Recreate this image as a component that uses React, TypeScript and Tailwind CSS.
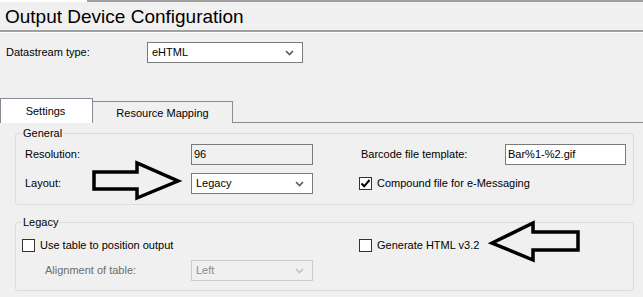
import React from "react";

const Chevron = ({ color = "#5a5a5a" }: { color?: string }) => (
  <svg width="9" height="6" viewBox="0 0 9 6" className="shrink-0">
    <path d="M1 1 L4.5 4.5 L8 1" fill="none" stroke={color} strokeWidth="1.6" />
  </svg>
);

const Select = ({ value, disabled = false, w = "w-[122px]" }: { value: string; disabled?: boolean; w?: string }) => (
  <div
    className={`${w} h-[21px] flex items-center justify-between pl-[4px] pr-[8px] border ${
      disabled ? "border-[#cccccc] bg-[#f0f0f0] text-[#8a8a8a]" : "border-[#7a7a7a] bg-white text-black"
    }`}
  >
    <span>{value}</span>
    <Chevron color={disabled ? "#c0c0c0" : "#5a5a5a"} />
  </div>
);

const Checkbox = ({ checked = false }: { checked?: boolean }) => (
  <div className="w-[13px] h-[13px] border border-[#333333] bg-white flex items-center justify-center shrink-0">
    {checked && (
      <svg width="11" height="11" viewBox="0 0 11 11">
        <path d="M1.5 5.5 L4.2 8.3 L9.5 2" fill="none" stroke="#000" strokeWidth="2" />
      </svg>
    )}
  </div>
);

export default function App() {
  return (
    <div
      className="w-[643px] h-[297px] bg-[#f0f0f0] relative overflow-hidden text-[11px] leading-[13px] text-black"
      style={{ fontFamily: '"Liberation Sans", Arial, sans-serif' }}
    >
      {/* top strip */}
      <div className="flex h-[2px]">
        <div className="w-[87px] bg-white" />
        <div className="flex-1 bg-[#a0a0a0]" />
      </div>
      {/* title */}
      <div className="h-[28px] pl-[5px] pt-[3px] text-[19px] leading-[24px]">Output Device Configuration</div>
      <div className="h-[3px] border-t-2 border-[#a0a0a0] bg-white" />

      {/* datastream */}
      <div className="flex items-center mt-[9px] pl-[6px]">
        <span className="w-[141px]">Datastream type:</span>
        <Select value="eHTML" w="w-[156px]" />
      </div>

      {/* tabs */}
      <div className="flex items-end mt-[35px] h-[25px]">
        <div className="w-[93px] h-[25px] border border-b-0 border-[#898c95] bg-white flex items-start justify-center pt-[6px] pr-[2px] relative z-10">
          Settings
        </div>
        <div className="w-[140px] h-[22px] border border-l-0 border-b-0 border-[#898c95] bg-[#f0f0f0] flex items-start justify-center pt-[5px]">
          Resource Mapping
        </div>
        <div className="flex-1 border-b border-[#898c95]" />
      </div>

      {/* panel */}
      <div className="pl-[15px] pr-[9px] pt-[10px]">
        {/* General group */}
        <div className="relative h-[72px] border border-[#dcdcdc] rounded-[3px]">
          <span className="absolute left-[6px] top-[-7px] px-[1px] bg-[#f0f0f0]">General</span>
          <div className="flex pt-[10px] pl-[9px]">
            <div className="flex flex-col gap-[8px]">
              <div className="flex items-center">
                <span className="w-[166px]">Resolution:</span>
                <div className="w-[122px] h-[21px] border border-[#7a7a7a] bg-[#f0f0f0] flex items-center pl-[2px]">96</div>
              </div>
              <div className="flex items-center">
                <span className="w-[166px]">Layout:</span>
                <Select value="Legacy" />
              </div>
            </div>
            <div className="flex flex-col ml-[46px] gap-[12px]">
              <div className="flex items-center">
                <span className="w-[146px] pl-[2px]">Barcode file template:</span>
                <div className="w-[121px] h-[21px] border border-[#7a7a7a] bg-white flex items-center pl-[2px]">Bar%1-%2.gif</div>
              </div>
              <div className="flex items-center gap-[5px]">
                <Checkbox checked />
                <span>Compound file for e-Messaging</span>
              </div>
            </div>
          </div>
        </div>

        {/* Legacy group */}
        <div className="relative h-[69px] mt-[17px] border border-[#dcdcdc] rounded-[3px]">
          <span className="absolute left-[6px] top-[-7px] px-[1px] bg-[#f0f0f0]">Legacy</span>
          <div className="flex pt-[16px] pl-[6px]">
            <div className="flex flex-col">
              <div className="flex items-center gap-[5px]">
                <Checkbox />
                <span>Use table to position output</span>
              </div>
              <div className="flex items-center mt-[8px] pl-[23px]">
                <span className="w-[146px] text-[#6d6d6d]">Alignment of table:</span>
                <Select value="Left" disabled />
              </div>
            </div>
            <div className="flex items-start ml-[46px]">
              <div className="flex items-center gap-[5px]">
                <Checkbox />
                <span>Generate HTML v3.2</span>
              </div>
            </div>
          </div>
        </div>
      </div>

      {/* annotation arrows */}
      <svg className="absolute left-0 top-0 pointer-events-none" width="643" height="297">
        <path
          d="M94 172 L137 172 L137 163 L178 181 L137 198 L137 189 L94 189 Z"
          fill="none"
          stroke="#000"
          strokeWidth="3.5"
          strokeLinejoin="miter"
        />
        <path
          d="M578 232 L533 232 L533 223 L492 243 L533 260 L533 250 L578 250 Z"
          fill="none"
          stroke="#000"
          strokeWidth="3.5"
          strokeLinejoin="miter"
        />
      </svg>
    </div>
  );
}
